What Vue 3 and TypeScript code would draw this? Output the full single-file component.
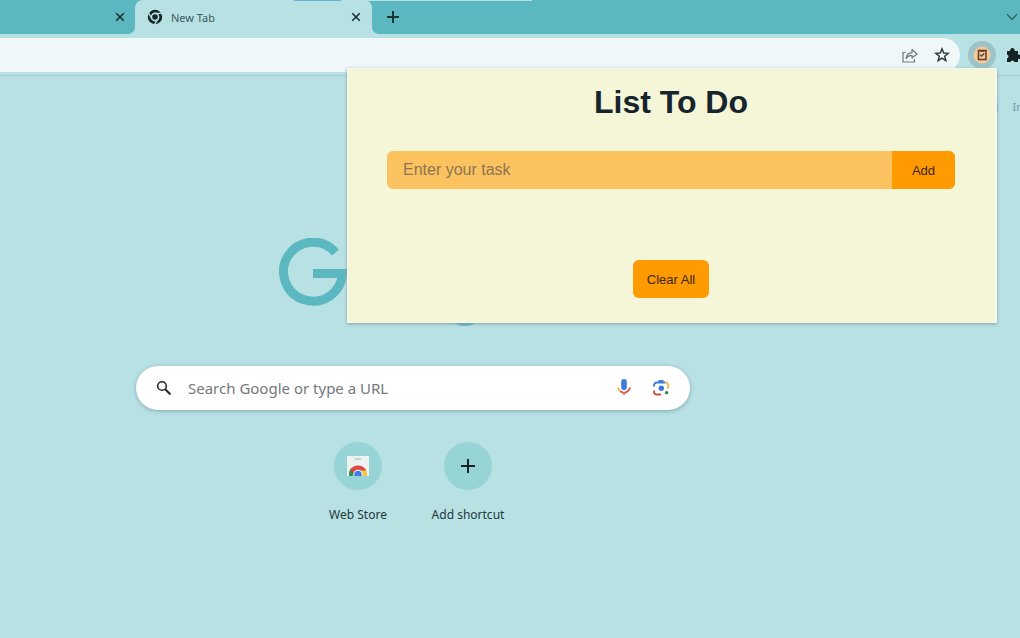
<script setup lang="ts">
import { ref } from 'vue'

const task = ref('')
const tasks = ref<string[]>([])
const query = ref('')

function addTask(): void {
  const value = task.value.trim()
  if (value) tasks.value.push(value)
  task.value = ''
}

function clearAll(): void {
  tasks.value = []
}
</script>

<template>
  <div class="browser">
    <header class="tabs">
      <div class="tab side">
        <button class="icon-btn" aria-label="Close tab">
          <svg width="10" height="10" viewBox="0 0 10 10"><path d="M1.2 1.2 8.8 8.8M8.8 1.2 1.2 8.8" stroke="#1b2f33" stroke-width="1.6" /></svg>
        </button>
      </div>
      <div class="tab active">
        <svg width="16" height="16" viewBox="0 0 16 16">
          <circle cx="8" cy="8" r="7.2" fill="#15262a" />
          <circle cx="8" cy="8" r="3.6" fill="none" stroke="#b9e1e4" stroke-width="1.6" />
          <path d="M8 4.4h7M5 9.8 1.6 4M11 9.8 7.5 15.5" stroke="#b9e1e4" stroke-width="1.4" />
        </svg>
        <span class="tab-title">New Tab</span>
        <button class="icon-btn" aria-label="Close New Tab">
          <svg width="10" height="10" viewBox="0 0 10 10"><path d="M1.2 1.2 8.8 8.8M8.8 1.2 1.2 8.8" stroke="#1b2f33" stroke-width="1.6" /></svg>
        </button>
      </div>
      <div class="tab rest">
        <button class="icon-btn" aria-label="New tab">
          <svg width="14" height="14" viewBox="0 0 14 14"><path d="M7 1v12M1 7h12" stroke="#1b3438" stroke-width="2" /></svg>
        </button>
        <button class="icon-btn" aria-label="Search tabs">
          <svg width="12" height="8" viewBox="0 0 12 8"><path d="M1 1.2 6 6.4 11 1.2" fill="none" stroke="#2e5357" stroke-width="1.2" /></svg>
        </button>
      </div>
      <div class="glint"></div>
    </header>

    <div class="toolbar">
      <div class="address">
        <button class="icon-btn" aria-label="Share">
          <svg width="16" height="15" viewBox="0 0 16 15" fill="none" stroke="#6d7b7f" stroke-width="1.2">
            <path d="M3.5 4.5H1V14h11.5v-3" /><path d="M4 10.5C4.5 6.5 7 4.7 10 4.6V1.5L15 6l-5 4V7.3C7.5 7.3 5.5 8.3 4 10.5z" stroke-linejoin="round" />
          </svg>
        </button>
        <button class="icon-btn" aria-label="Bookmark">
          <svg width="16" height="16" viewBox="0 0 16 16"><path d="M8 1.8 9.7 6l4.5.3-3.5 2.9 1.2 4.5L8 11.2l-3.9 2.5 1.2-4.5L1.8 6.3 6.3 6z" fill="none" stroke="#28363a" stroke-width="1.4" /></svg>
        </button>
      </div>
      <button class="icon-btn ext" aria-label="List To Do extension">
        <svg width="28" height="28" viewBox="0 0 28 28">
          <circle cx="14" cy="14" r="14" fill="#9cc3c6" /><circle cx="14" cy="14" r="8.5" fill="#f6c79a" />
          <path d="M10.5 9.5h7.5v9h-7.5z" fill="none" stroke="#5a3c24" stroke-width="1.5" />
          <path d="M12 10h4.5M12.3 13.8l1.3 1.3 2.6-2.6" fill="none" stroke="#5a3c24" stroke-width="1.3" />
        </svg>
      </button>
      <button class="icon-btn puzzle" aria-label="Extensions">
        <svg width="16" height="16" viewBox="0 0 16 16"><path d="M2 4h3.2a2.3 2.3 0 1 1 4.4 0H13v3.6a2.3 2.3 0 1 1 0 4.4v3H9.5a2.2 2.2 0 0 0-4.2 0H2v-3.4a2.2 2.2 0 0 0 0-4.2z" fill="#142225" /></svg>
      </button>
    </div>

    <main class="page">
      <nav class="links"><a href="#mail">l</a><a href="#images">In</a></nav>
      <svg class="logo" width="268" height="94" viewBox="0 0 268 94" role="img" aria-label="Google">
        <path d="M56.5 14.5A29.5 29.5 0 1 0 63.5 35.5H34" fill="none" stroke="#5cb8c0" stroke-width="9" />
        <circle cx="186" cy="69" r="15" fill="none" stroke="#5cb8c0" stroke-width="8" />
      </svg>
      <form class="search" @submit.prevent>
        <svg width="16" height="16" viewBox="0 0 16 16" fill="none" stroke="#25292b"><circle cx="6" cy="6" r="4.3" stroke-width="1.6" /><path d="m9.2 9.2 5.3 5.3" stroke-width="2" /></svg>
        <input v-model="query" aria-label="Search Google or type a URL" placeholder="Search Google or type a URL" />
        <button class="icon-btn" type="button" aria-label="Search by voice">
          <svg width="14" height="18" viewBox="0 0 14 18" fill="none">
            <rect x="4.2" y="0" width="5.6" height="11" rx="2.8" fill="#3f7bdc" />
            <path d="M1 8.5c.5 2 1.2 3 2.7 4" stroke="#efb43f" stroke-width="1.8" /><path d="M3.3 12.2c2.4 1.9 5.4 1.9 7.4 0C12 11.2 12.6 10.3 13 8.5" stroke="#d25548" stroke-width="1.8" />
            <path d="M7 13.5V16" stroke="#c88468" stroke-width="1.8" />
          </svg>
        </button>
        <button class="icon-btn" type="button" aria-label="Search by image">
          <svg width="18" height="18" viewBox="0 0 18 18" fill="none" stroke-width="1.9">
            <path d="M2 7.5V6.3A2.8 2.8 0 0 1 4.8 3.5H13" stroke="#3b78da" /><path d="M6.5 2h5" stroke="#3b78da" />
            <path d="M13 3.5a3 3 0 0 1 3.2 3v3" stroke="#edbd38" /><path d="M2 11.5v1.2A2.8 2.8 0 0 0 4.8 15.5H9" stroke="#d24d43" />
            <circle cx="9.3" cy="9.3" r="2.7" fill="#3b78da" /><circle cx="14.6" cy="13.8" r="1.8" fill="#2c9150" />
          </svg>
        </button>
      </form>
      <div class="shortcuts">
        <a class="shortcut" href="#web-store">
          <span class="disc">
            <svg width="22" height="20" viewBox="0 0 22 20">
              <path d="M0 0h22v20H0z" fill="#edf1f0" /><path d="M8 3h6" stroke="#b8d9dc" stroke-width="2" />
              <path d="M2 20v-2a9 9 0 0 1 2-5.8L8.5 15 6.5 20z" fill="#2e9253" /><path d="M20 20v-2a9 9 0 0 0-2-5.8L13.5 15l2 5z" fill="#f3c744" />
              <path d="M2.8 14.5a9.3 9.3 0 0 1 16.4 0h-4.7L11 15.5 7 17z" fill="#d94b42" />
              <circle cx="11" cy="18.5" r="4.7" fill="#fff" /><path d="M7.3 20v-1.5a3.7 3.7 0 0 1 7.4 0V20z" fill="#3f7de0" />
            </svg>
          </span>
          Web Store
        </a>
        <button class="shortcut" type="button">
          <span class="disc"><svg width="14" height="14" viewBox="0 0 14 14"><path d="M7 0v14M0 7h14" stroke="#172426" stroke-width="2" /></svg></span>
          Add shortcut
        </button>
      </div>
    </main>

    <section class="popup" aria-labelledby="popup-title">
      <h1 id="popup-title">List To Do</h1>
      <form class="entry" @submit.prevent="addTask">
        <input v-model="task" aria-label="Enter your task" placeholder="Enter your task" />
        <button>Add</button>
      </form>
      <ul class="tasks"><li v-for="item in tasks" :key="item">{{ item }}</li></ul>
      <button class="clear" type="button" @click="clearAll">Clear All</button>
    </section>
  </div>
</template>

<style>
body { margin: 0; background: #b8e1e4; }
</style>

<style scoped>
* { box-sizing: border-box; }
.browser { position: relative; min-height: 100vh; overflow: hidden; background: #b8e1e4; font-family: "Noto Sans", "Open Sans", sans-serif; color: #23383c; }
button, input { border: 0; padding: 0; background: none; font: inherit; color: inherit; }
a { color: inherit; text-decoration: none; }
.icon-btn { display: flex; flex: none; align-items: center; justify-content: center; }
.tabs { position: relative; display: flex; height: 34px; }
.tab { display: flex; align-items: center; }
.side { width: 135px; justify-content: flex-end; padding-right: 10px; background: #5cb8c0; border-bottom-right-radius: 7px; }
.active { width: 237px; padding: 0 11px 0 12px; gap: 8px; border-radius: 8px 8px 0 0; background: #b8e1e4; box-shadow: 0 -8px #5cb8c0; font-size: 11px; }
.tab-title { flex: 1; color: #3c5a5e; }
.rest { flex: 1; justify-content: space-between; padding: 0 2px 0 14px; background: #5cb8c0; border-bottom-left-radius: 7px; }
.glint { position: absolute; top: 0; left: 294px; width: 238px; height: 1px; background: linear-gradient(90deg, #68b4d0 47px, #b8e1e4 47px); }
.toolbar { display: flex; align-items: center; height: 42px; padding-top: 1px; border-bottom: 1px solid #a2cdd2; }
.address { flex: 1; display: flex; justify-content: flex-end; align-items: center; gap: 16px; height: 34px; padding-right: 10px; background: #eff7f9; border-radius: 0 17px 17px 0; }
.ext { margin-left: 8px; }
.puzzle { margin: 0 -1px 0 9px; }
.page { display: flex; flex-direction: column; align-items: center; padding-right: 194px; }
.links { display: flex; gap: 14px; align-self: flex-end; height: 162px; margin-right: -197px; padding-top: 22px; font-size: 11px; line-height: 18px; color: #71979c; }
.logo { display: block; }
.search { display: flex; align-items: center; width: 554px; height: 44px; margin-top: 34px; padding: 0 20px; border-radius: 22px; background: #fff; box-shadow: 0 1px 4px #7fa9ae; }
.search input { flex: 1; min-width: 0; margin-left: 16px; outline: 0; font-size: 15px; }
.search .icon-btn + .icon-btn { margin-left: 21px; }
input::placeholder { color: #75797a; opacity: 1; }
.shortcuts { display: flex; margin-top: 32px; }
.shortcut { display: flex; flex-direction: column; align-items: center; gap: 16px; width: 110px; font-size: 12px; line-height: 18px; }
.disc { display: flex; align-items: center; justify-content: center; width: 48px; height: 48px; border-radius: 50%; background: #96d4d6; }
.popup { position: absolute; top: 68px; right: 23px; width: 650px; padding: 14px 40px 24px 39px; border: 1px solid #f4f7ec; border-right-width: 2px; background: #f5f5d7; box-shadow: 0 1px 3px #829fa5; font-family: "Liberation Sans", Arial, sans-serif; }
.popup h1 { margin: 0; text-align: center; font-size: 32px; line-height: 38px; color: #15242d; }
.entry { display: flex; height: 38px; margin-top: 30px; border-radius: 6px; overflow: hidden; background: #fdc260; }
.entry input { flex: 1; min-width: 0; padding: 0 16px; outline: 0; font-size: 16px; }
.entry input::placeholder { color: #8b7650; }
.entry button { width: 63px; background: #ff9a00; font-size: 13px; color: #3a250c; }
.tasks { min-height: 71px; margin: 0; padding: 0; list-style: none; }
.clear { display: block; height: 38px; margin: 0 auto; padding: 0 14px; border-radius: 6px; background: #ff9a00; font-size: 13px; color: #3a250c; }
</style>
